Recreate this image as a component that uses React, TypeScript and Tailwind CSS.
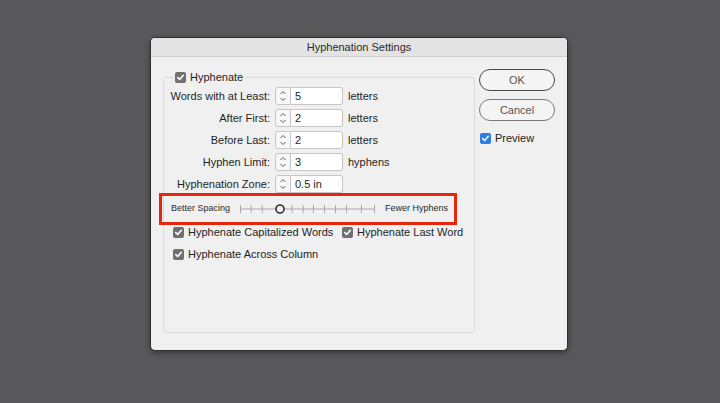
import React from "react";

const font = { fontFamily: '"Liberation Sans", Arial, sans-serif' };

function Check({ blue = false }: { blue?: boolean }) {
  return (
    <span
      className={
        "inline-flex w-[11px] h-[11px] rounded-[2px] items-center justify-center shrink-0 " +
        (blue ? "bg-[#2b7de9]" : "bg-[#707070]")
      }
    >
      <svg width="9" height="9" viewBox="0 0 9 9">
        <path d="M1.8 4.6 L3.7 6.5 L7.3 2.3" fill="none" stroke="#fff" strokeWidth="1.6" strokeLinecap="round" strokeLinejoin="round" />
      </svg>
    </span>
  );
}

function Stepper() {
  return (
    <span className="w-[16px] h-[18px] border border-[#c6c6c6] rounded-l-[3px] bg-[#f7f7f7] flex items-center justify-center">
      <svg width="14" height="16" viewBox="0 0 14 16">
        <path d="M4.5 6 L7 3.5 L9.5 6" fill="none" stroke="#5a5a5a" strokeWidth="1" />
        <path d="M4.5 10 L7 12.5 L9.5 10" fill="none" stroke="#5a5a5a" strokeWidth="1" />
      </svg>
    </span>
  );
}

function Row({ label, value, unit }: { label: string; value: string; unit?: string }) {
  return (
    <div className="h-[22px] flex items-center">
      <span className="w-[106px] text-right text-[11px] text-[#1e1e1e]">{label}</span>
      <span className="ml-[5px] flex items-center">
        <Stepper />
        <span className="w-[52px] h-[18px] border border-l-0 border-[#c6c6c6] rounded-r-[3px] bg-white flex items-center pl-[4px] text-[11px] text-[#1e1e1e]">
          {value}
        </span>
      </span>
      {unit && <span className="ml-[5px] text-[11px] text-[#1e1e1e]">{unit}</span>}
    </div>
  );
}

function Slider() {
  const ticks = [0, 10.7, 21.7, 51.7, 62.7, 73, 84, 95, 106, 121, 134];
  return (
    <svg width="136" height="14" viewBox="0 0 136 14">
      <line x1="0" y1="7" x2="135" y2="7" stroke="#a8a8a8" strokeWidth="1" />
      {ticks.map((t, i) => (
        <line key={i} x1={t + 0.5} y1="3" x2={t + 0.5} y2="11" stroke="#a8a8a8" strokeWidth="1" />
      ))}
      <circle cx="40" cy="7" r="4" fill="#f0f0f0" stroke="#2e2e2e" strokeWidth="1.6" />
    </svg>
  );
}

export default function App() {
  return (
    <div className="w-[720px] h-[403px] bg-[#59595b] flex justify-center items-start" style={font}>
      <div className="mt-[37px] ml-[-2px] w-[418px] h-[314px] bg-[#f0f0f0] rounded-[5px] border border-[#2f2f2f] overflow-hidden flex flex-col shadow-[0_2px_6px_rgba(0,0,0,0.4)]">
        <div className="h-[19px] bg-[#e3e3e3] border-b border-[#cfcfcf] flex items-center justify-center text-[11px] text-[#2a2a2a]">
          Hyphenation Settings
        </div>
        <div className="flex flex-1 pl-[12px] pt-[20px]">
          <div className="relative w-[312px] h-[256px] border border-[#dadada] rounded-[3px] pt-[7px]">
            <div className="absolute top-[-9px] left-[10px] bg-[#f0f0f0] px-[1px] flex items-center gap-[4px] text-[11px] text-[#1e1e1e]">
              <Check />
              <span>Hyphenate</span>
            </div>
            <Row label="Words with at Least:" value="5" unit="letters" />
            <Row label="After First:" value="2" unit="letters" />
            <Row label="Before Last:" value="2" unit="letters" />
            <Row label="Hyphen Limit:" value="3" unit="hyphens" />
            <Row label="Hyphenation Zone:" value="0.5 in" />
            <div className="ml-[-5px] mt-[-2px] w-[298px] h-[32px] border-[3px] border-[#e5260e] flex items-center pl-[9px] text-[9px] text-[#2a2a2a]">
              <span className="w-[60px]">Better Spacing</span>
              <span className="ml-[9px] flex items-center">
                <Slider />
              </span>
              <span className="ml-[9px]">Fewer Hyphens</span>
            </div>
            <div className="mt-[1px] h-[12px] flex items-center pl-[9px] text-[11px] text-[#1e1e1e]">
              <span className="w-[169px] flex items-center gap-[4px]">
                <Check />
                <span>Hyphenate Capitalized Words</span>
              </span>
              <span className="flex items-center gap-[4px]">
                <Check />
                <span>Hyphenate Last Word</span>
              </span>
            </div>
            <div className="mt-[10px] h-[12px] flex items-center pl-[9px] gap-[4px] text-[11px] text-[#1e1e1e]">
              <Check />
              <span>Hyphenate Across Column</span>
            </div>
          </div>
          <div className="ml-[4px] mt-[-8px] flex flex-col">
            <div className="w-[76px] h-[22px] rounded-full border-[1.5px] border-[#4a4a4a] bg-[#f4f4f4] flex items-center justify-center text-[11px] text-[#555]">
              OK
            </div>
            <div className="mt-[8px] w-[76px] h-[22px] rounded-full border border-[#7a7a7a] bg-[#f4f4f4] flex items-center justify-center text-[11px] text-[#555]">
              Cancel
            </div>
            <div className="mt-[9px] ml-[1px] flex items-center gap-[4px] text-[11px] text-[#1e1e1e]">
              <Check blue />
              <span>Preview</span>
            </div>
          </div>
        </div>
      </div>
    </div>
  );
}
